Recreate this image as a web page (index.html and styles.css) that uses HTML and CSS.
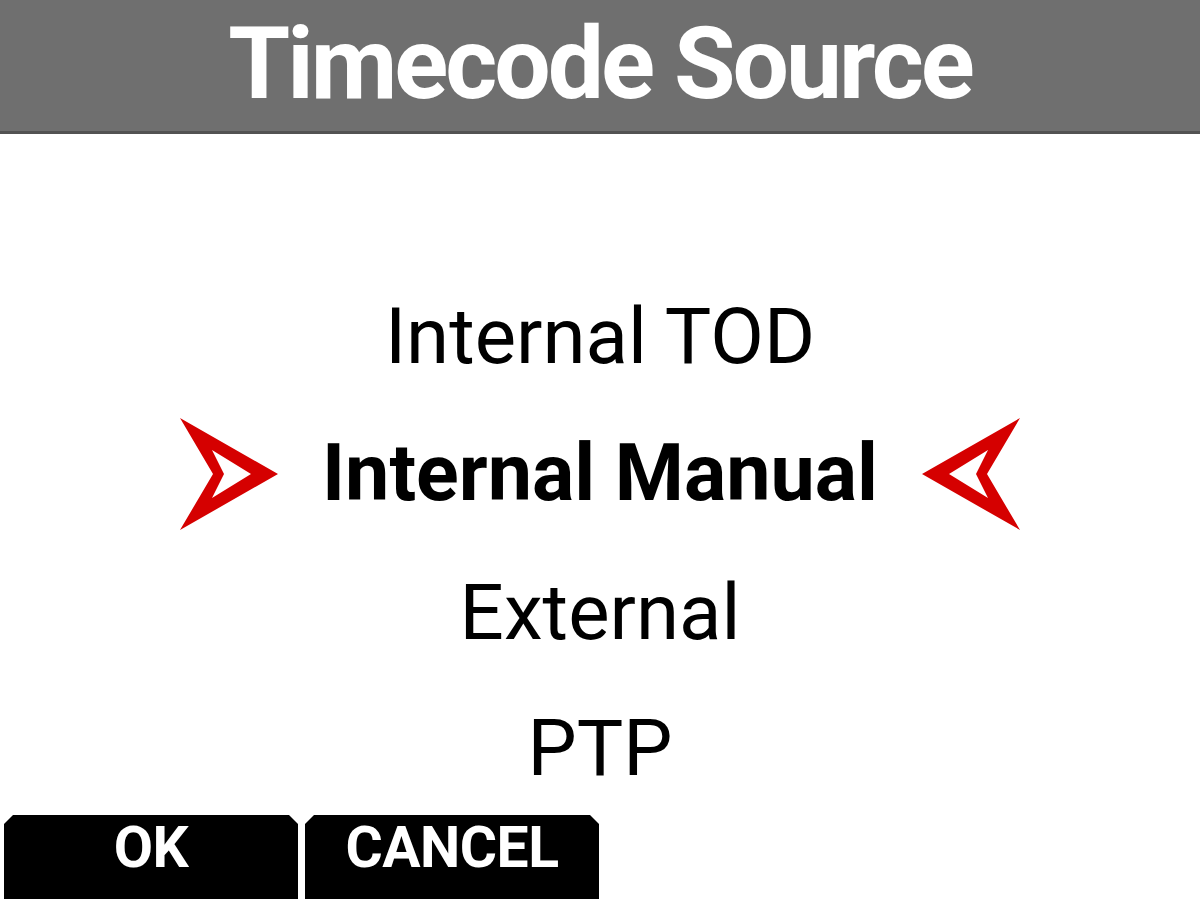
FILE: index.html
```html
<!DOCTYPE html>
<html lang="en">
<head>
<meta charset="utf-8">
<title>Timecode Source</title>
<link rel="stylesheet" href="styles.css">
</head>
<body>
<div class="screen">
  <header class="title-bar">
    <h1 class="title">Timecode Source</h1>
  </header>
  <main class="options">
    <div class="option">Internal TOD</div>
    <div class="option option-selected">
      <svg class="arrow" viewBox="0 0 100 114" width="100" height="114" aria-hidden="true">
        <path fill="#d50000" fill-rule="evenodd" d="M2 2 L100 58 L2 114 L35 58 Z M34 34 L73 58 L34 82 L46 58 Z"/>
      </svg>
      <span class="option-label">Internal Manual</span>
      <svg class="arrow arrow-left" viewBox="0 0 100 114" width="100" height="114" aria-hidden="true">
        <path fill="#d50000" fill-rule="evenodd" d="M2 2 L100 58 L2 114 L35 58 Z M34 34 L73 58 L34 82 L46 58 Z"/>
      </svg>
    </div>
    <div class="option option-ext">External</div>
    <div class="option">PTP</div>
  </main>
  <footer class="softkeys">
    <div class="softkey">OK</div>
    <div class="softkey">CANCEL</div>
  </footer>
</div>
</body>
</html>
```
FILE: styles.css
```css
html, body {
  margin: 0;
  padding: 0;
  background: #ffffff;
}
.screen {
  width: 1200px;
  height: 899px;
  overflow: hidden;
  display: flex;
  flex-direction: column;
  font-family: Roboto, "Liberation Sans", sans-serif;
  background: #ffffff;
}
.title-bar {
  height: 131px;
  flex: none;
  background: #6f6f6f;
  border-bottom: 3px solid #525252;
  display: flex;
  align-items: center;
  justify-content: center;
}
.title {
  margin: 0;
  color: #ffffff;
  font-weight: 700;
  font-size: 100px;
  line-height: 1;
  letter-spacing: -3px;
  padding-bottom: 4px;
}
.options {
  display: flex;
  flex-direction: column;
  align-items: center;
  padding-top: 164px;
  gap: 58px;
}
.option {
  height: 78px;
  line-height: 78px;
  font-size: 78px;
  font-weight: 400;
  color: #000000;
  display: flex;
  align-items: center;
  justify-content: center;
  white-space: nowrap;
}
.option-ext {
  margin-top: 4px;
}
.option-selected {
  gap: 44px;
  font-weight: 700;
}
.option-label {
  font-size: 79px;
  letter-spacing: 0;
}
.arrow {
  flex: none;
  display: block;
}
.arrow-left {
  transform: scaleX(-1);
}
.softkeys {
  margin-top: auto;
  height: 84px;
  flex: none;
  display: flex;
  gap: 7px;
  padding-left: 4px;
}
.softkey {
  width: 294px;
  height: 84px;
  background: #000000;
  color: #ffffff;
  font-weight: 700;
  font-size: 57px;
  letter-spacing: -0.5px;
  line-height: 66px;
  text-align: center;
  clip-path: polygon(9px 0, calc(100% - 9px) 0, 100% 9px, 100% 100%, 0 100%, 0 9px);
}
```
